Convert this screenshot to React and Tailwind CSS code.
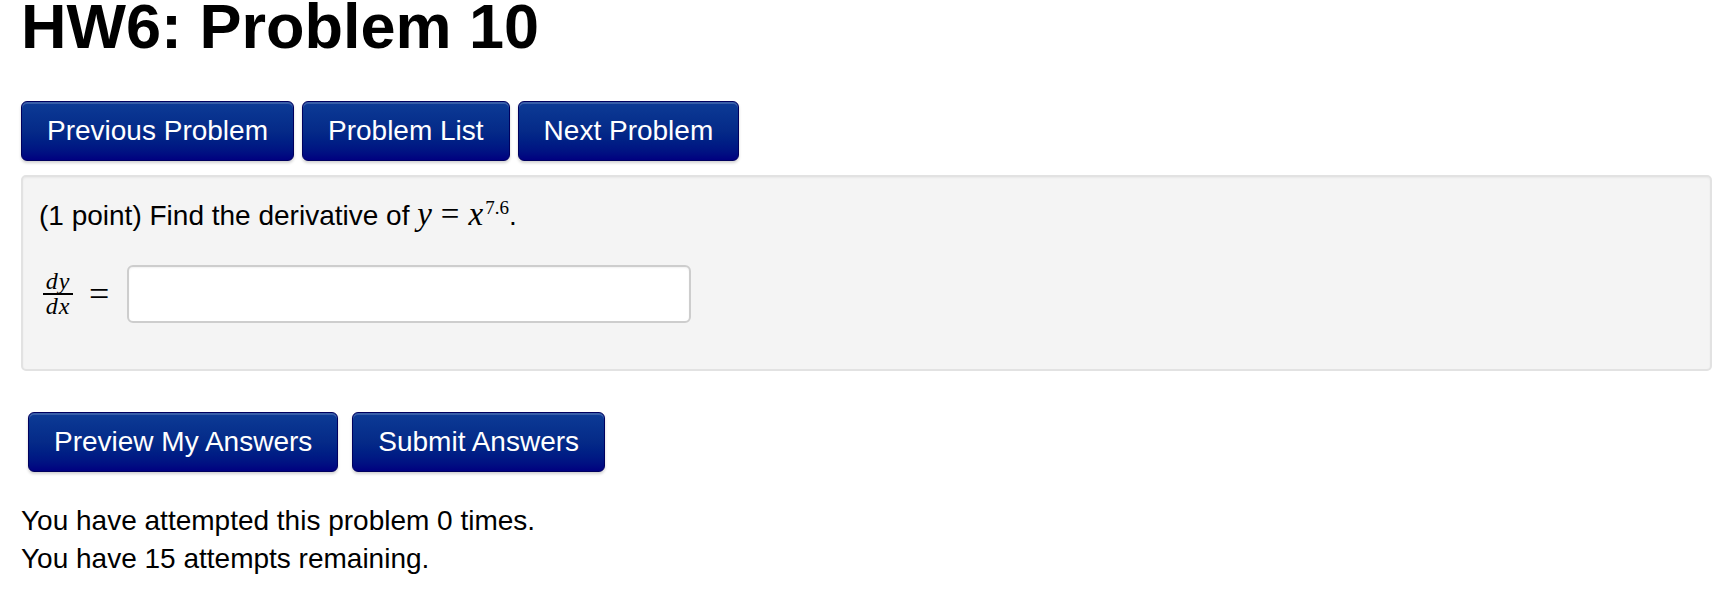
import React from "react";

const navButton =
  "h-[60px] px-[25px] rounded-[6px] border border-[#00005e] bg-linear-to-b from-[#0d3b96] via-[#052a88] to-[#000080] text-white text-[28px] leading-none shadow-[inset_0_2px_0_rgba(255,255,255,0.18),0_2px_3px_rgba(0,0,0,0.18)]";

const Fraction = () => (
  <span className="inline-flex flex-col items-center font-['Liberation_Serif',serif] italic text-[24px] leading-[23px]">
    <span className="px-[1px] tracking-[1px]">dy</span>
    <span className="h-[2px] w-[30px] bg-black"></span>
    <span className="px-[1px] tracking-[1px]">dx</span>
  </span>
);

export default function App() {
  return (
    <div className="min-h-screen bg-white pl-[21px] pr-[22px] font-['Liberation_Sans',Arial,sans-serif] text-black">
      <h1 className="text-[63px] font-bold leading-[52px]">HW6: Problem 10</h1>

      {/* Problem navigation */}
      <div className="mt-[49px] flex gap-2">
        <button className={navButton}>Previous Problem</button>
        <button className={navButton}>Problem List</button>
        <button className={navButton}>Next Problem</button>
      </div>

      {/* Problem body */}
      <div className="mt-[14px] rounded-[5px] border-2 border-[#e2e2e2] bg-[#f4f4f4] px-4 pt-[17px] pb-[46px] shadow-[inset_0_1px_2px_rgba(0,0,0,0.05)]">
        <p className="text-[28px] leading-[40px]">
          (1 point) Find the derivative of{" "}
          <span className="font-['Liberation_Serif',serif] text-[33px]">
            <i>y</i>
            <span className="mx-[9px]">=</span>
            <i>x</i>
            <span className="relative -top-[11px] ml-[2px] text-[19px] leading-none">7.6</span>
          </span>
          .
        </p>

        <div className="mt-[29px] flex items-center">
          <span className="ml-[4px]">
            <Fraction />
          </span>
          <span className="ml-[16px] font-['Liberation_Serif',serif] text-[36px] leading-none">=</span>
          <input
            type="text"
            className="ml-[18px] h-[58px] w-[564px] rounded-[6px] border-2 border-[#cdcdcd] bg-white shadow-[inset_0_1px_2px_rgba(0,0,0,0.06)]"
          />
        </div>
      </div>

      {/* Submit buttons */}
      <div className="mt-[41px] ml-[7px] flex gap-[14px]">
        <button className={navButton}>Preview My Answers</button>
        <button className={navButton}>Submit Answers</button>
      </div>

      <div className="mt-[30px] text-[28px] leading-[38px]">
        <p>You have attempted this problem 0 times.</p>
        <p>You have 15 attempts remaining.</p>
      </div>
    </div>
  );
}
